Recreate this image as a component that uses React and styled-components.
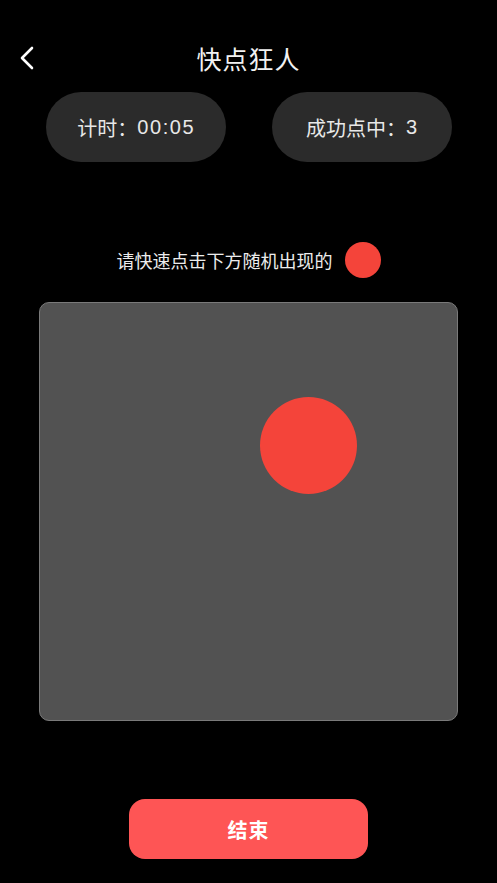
import React from "react";
import styled, { createGlobalStyle } from "styled-components";

const GlobalStyle = createGlobalStyle`
  html, body {
    margin: 0;
    padding: 0;
    background: #000;
  }
  body {
    font-family: "Noto Sans CJK SC", "Noto Sans", sans-serif;
    color: #fff;
  }
`;

const Page = styled.div`
  width: 497px;
  height: 883px;
  background: #000;
  display: flex;
  flex-direction: column;
  align-items: center;
  overflow: hidden;
`;

const Header = styled.div`
  position: relative;
  width: 100%;
  height: 40px;
  margin-top: 38px;
  display: flex;
  align-items: center;
  justify-content: center;
`;

const BackButton = styled.button`
  position: absolute;
  left: 14px;
  top: 50%;
  transform: translateY(-50%);
  background: none;
  border: none;
  padding: 6px;
  display: flex;
  cursor: pointer;
`;

const Title = styled.h1`
  margin: 0;
  font-size: 25px;
  font-weight: 400;
  letter-spacing: 1px;
  color: #f2f2f2;
`;

const Stats = styled.div`
  display: flex;
  justify-content: center;
  gap: 46px;
  margin-top: 14px;
`;

const Pill = styled.div`
  width: 180px;
  height: 70px;
  border-radius: 35px;
  background: #2b2b2b;
  display: flex;
  align-items: center;
  justify-content: center;
  font-size: 20px;
  color: #e8e8e8;
  font-family: "Noto Sans CJK SC", "Noto Sans", sans-serif;
  white-space: nowrap;
`;

const Num = styled.span`
  font-family: "Liberation Sans", Arial, sans-serif;
  font-size: 20px;
  letter-spacing: 1.6px;
  margin-right: -1.6px;
`;

const Hint = styled.div`
  display: flex;
  align-items: center;
  gap: 12px;
  margin-top: 80px;
`;

const HintText = styled.span`
  font-size: 18px;
  color: #ececec;
  white-space: nowrap;
`;

const Dot = styled.div`
  width: ${(p) => p.size}px;
  height: ${(p) => p.size}px;
  border-radius: 50%;
  background: #f4443a;
  flex-shrink: 0;
`;

const Board = styled.div`
  position: relative;
  box-sizing: border-box;
  width: 419px;
  height: 419px;
  margin-top: 24px;
  background: #525252;
  border: 1px solid #7a7a7a;
  border-radius: 10px;
`;

const Target = styled(Dot)`
  position: absolute;
`;

const EndButton = styled.button`
  width: 239px;
  height: 60px;
  margin-top: 78px;
  border: none;
  border-radius: 16px;
  background: #fe5555;
  color: #fff;
  font-size: 20px;
  font-weight: 700;
  font-family: "Noto Sans CJK SC", "Noto Sans", sans-serif;
  letter-spacing: 1px;
  cursor: pointer;
`;

const BackIcon = () => (
  <svg width="14" height="24" viewBox="0 0 14 24" fill="none">
    <path
      d="M12 2 L2 12 L12 22"
      stroke="#fff"
      strokeWidth="2.6"
      strokeLinecap="round"
      strokeLinejoin="round"
    />
  </svg>
);

const target = { x: 220, y: 94 };

export default function App() {
  return (
    <>
      <GlobalStyle />
      <Page>
        <Header>
          <BackButton aria-label="返回">
            <BackIcon />
          </BackButton>
          <Title>快点狂人</Title>
        </Header>
        <Stats>
          <Pill>
            计时：<Num>00:05</Num>
          </Pill>
          <Pill>
            成功点中：<Num>3</Num>
          </Pill>
        </Stats>
        <Hint>
          <HintText>请快速点击下方随机出现的</HintText>
          <Dot size={36} />
        </Hint>
        <Board>
          <Target size={97} style={{ left: target.x, top: target.y }} />
        </Board>
        <EndButton>结束</EndButton>
      </Page>
    </>
  );
}
